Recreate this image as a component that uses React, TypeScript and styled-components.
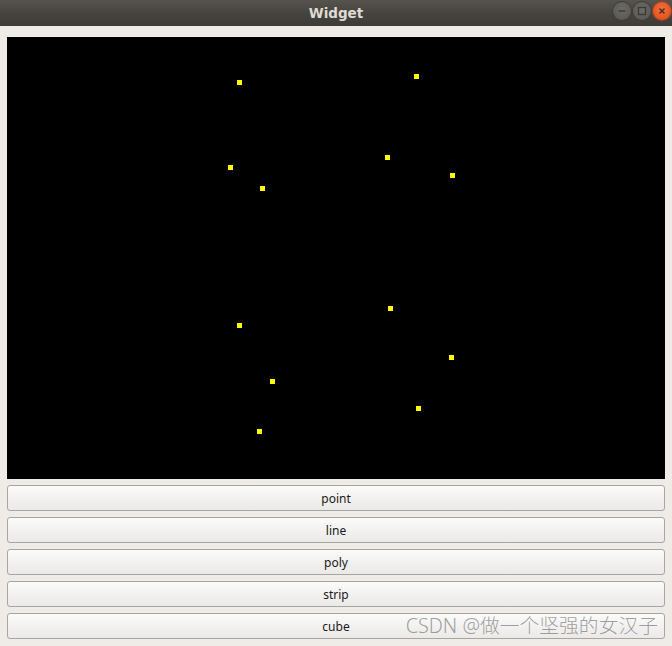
import React from "react";
import styled, { createGlobalStyle } from "styled-components";

const GlobalStyle = createGlobalStyle`
  html, body {
    margin: 0;
    padding: 0;
    background: #efebe7;
  }
  body {
    font-family: "Noto Sans", "Open Sans", sans-serif;
  }
`;

const Window = styled.div`
  width: 672px;
  height: 646px;
  display: flex;
  flex-direction: column;
  background: #efebe7;
  position: relative;
  overflow: hidden;
`;

const TitleBar = styled.header`
  height: 26px;
  flex: none;
  display: flex;
  align-items: center;
  justify-content: center;
  position: relative;
  background: linear-gradient(to bottom, #57544e 0%, #46443f 50%, #3c3b37 100%);
`;

const Title = styled.span`
  font-family: "DejaVu Sans", sans-serif;
  font-weight: bold;
  font-size: 13.5px;
  color: #dfdbd2;
`;

const Controls = styled.div`
  position: absolute;
  right: 1px;
  top: 2px;
  display: flex;
  gap: 2px;
`;

const Ctrl = styled.div<{ $close?: boolean }>`
  width: 18px;
  height: 18px;
  border-radius: 50%;
  display: flex;
  align-items: center;
  justify-content: center;
  background: ${(p) =>
    p.$close
      ? "radial-gradient(circle at 50% 40%, #f2703f, #dd4814)"
      : "radial-gradient(circle at 50% 40%, #6c6b66, #55534e)"};
  box-shadow: 0 0 0 1px ${(p) => (p.$close ? "#a8401a" : "#3e3d39")};
`;

const Body = styled.main`
  flex: 1;
  display: flex;
  flex-direction: column;
  padding: 11px 7px 7px 7px;
  gap: 6px;
`;

const Canvas = styled.div`
  height: 442px;
  background: #000;
  position: relative;
`;

const Dot = styled.div`
  position: absolute;
  width: 5px;
  height: 5px;
  background: #ffff00;
`;

const Buttons = styled.div`
  display: flex;
  flex-direction: column;
  gap: 6px;
`;

const Button = styled.button`
  height: 26px;
  margin: 0;
  padding: 0;
  border: 1px solid #a9a59f;
  border-radius: 3px;
  background: linear-gradient(to bottom, #fbfbfa 0%, #f1f0ef 60%, #ebeae8 100%);
  font-family: "Noto Sans", "Open Sans", sans-serif;
  font-size: 12px;
  color: #1a1a1a;
  display: flex;
  align-items: center;
  justify-content: center;
`;

const Watermark = styled.div`
  position: absolute;
  right: 14px;
  bottom: 7px;
  font-family: "Noto Sans", "Noto Sans CJK SC", sans-serif;
  font-size: 19.8px;
  font-weight: 300;
  color: rgba(120, 120, 120, 0.7);
  pointer-events: none;
  white-space: nowrap;
`;

const points: [number, number][] = [
  [239, 82],
  [416, 76],
  [230, 167],
  [262, 188],
  [387, 157],
  [452, 175],
  [390, 308],
  [239, 325],
  [451, 357],
  [272, 381],
  [418, 408],
  [259, 431],
];

const labels = ["point", "line", "poly", "strip", "cube"];

export default function App() {
  return (
    <Window>
      <GlobalStyle />
      <TitleBar>
        <Title>Widget</Title>
        <Controls>
          <Ctrl>
            <svg width="10" height="10" viewBox="0 0 10 10">
              <line x1="1.5" y1="5" x2="8.5" y2="5" stroke="#3a3935" strokeWidth="1.4" />
            </svg>
          </Ctrl>
          <Ctrl>
            <svg width="10" height="10" viewBox="0 0 10 10">
              <rect x="1.5" y="1.5" width="7" height="7" fill="none" stroke="#3a3935" strokeWidth="1.3" />
            </svg>
          </Ctrl>
          <Ctrl $close>
            <svg width="10" height="10" viewBox="0 0 10 10">
              <path d="M2.5 2.5 L7.5 7.5 M7.5 2.5 L2.5 7.5" stroke="#4a2a1a" strokeWidth="1.4" />
            </svg>
          </Ctrl>
        </Controls>
      </TitleBar>
      <Body>
        <Canvas>
          {points.map(([x, y], i) => (
            <Dot key={i} style={{ left: x - 7 - 2, top: y - 37 - 2 }} />
          ))}
        </Canvas>
        <Buttons>
          {labels.map((l) => (
            <Button key={l}>{l}</Button>
          ))}
        </Buttons>
      </Body>
      <Watermark>CSDN @做一个坚强的女汉子</Watermark>
    </Window>
  );
}
